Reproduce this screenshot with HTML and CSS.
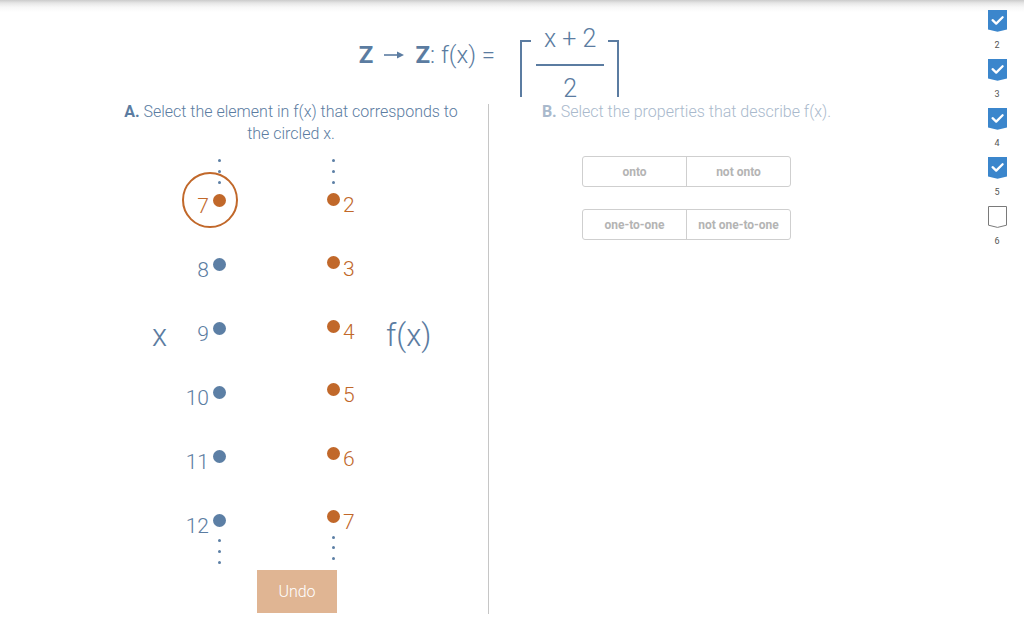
FILE: index.html
```html
<!DOCTYPE html>
<html lang="en">
<head>
<meta charset="utf-8">
<title>Function mapping</title>
<link rel="stylesheet" href="styles.css">
</head>
<body>
<div class="app">
  <div class="main">
    <div class="formula">
      <div class="lhs"><b>Z</b><svg class="arrow" viewBox="0 0 20 10" width="20" height="10" aria-label="→"><path d="M0 5H14" stroke="#5b7ca1" stroke-width="1.6"/><path d="M13 1.4L20 5L13 8.6Z" fill="#5b7ca1"/></svg><b>Z</b>: f(x) =</div>
      <div class="ceil ceil-l"></div>
      <div class="frac">
        <div class="num">x + 2</div>
        <div class="bar"></div>
        <div class="den">2</div>
      </div>
      <div class="ceil ceil-r"></div>
    </div>
    <div class="panels">
      <div class="panel panel-a">
        <div class="heading narrow"><b>A.</b> Select the element in f(x) that corresponds to the circled x.</div>
        <div class="diagram">
          <div class="set-label xlabel">x</div>
          <div class="col col-left">
            <div class="ellipsis"><i></i><i></i><i></i></div>
            <div class="row first selected"><span class="lbl orange">7</span><span class="dot orange-bg"></span><span class="ring"></span></div>
            <div class="row"><span class="lbl">8</span><span class="dot"></span></div>
            <div class="row"><span class="lbl">9</span><span class="dot"></span></div>
            <div class="row"><span class="lbl">10</span><span class="dot"></span></div>
            <div class="row"><span class="lbl">11</span><span class="dot"></span></div>
            <div class="row last"><span class="lbl">12</span><span class="dot"></span></div>
            <div class="ellipsis bottom"><i></i><i></i><i></i></div>
          </div>
          <div class="col col-right">
            <div class="ellipsis"><i></i><i></i><i></i></div>
            <div class="row first"><span class="dot orange-bg"></span><span class="lbl orange">2</span></div>
            <div class="row"><span class="dot orange-bg"></span><span class="lbl orange">3</span></div>
            <div class="row"><span class="dot orange-bg"></span><span class="lbl orange">4</span></div>
            <div class="row"><span class="dot orange-bg"></span><span class="lbl orange">5</span></div>
            <div class="row"><span class="dot orange-bg"></span><span class="lbl orange">6</span></div>
            <div class="row last"><span class="dot orange-bg"></span><span class="lbl orange">7</span></div>
            <div class="ellipsis bottom"><i></i><i></i><i></i></div>
          </div>
          <div class="set-label flabel">f(x)</div>
        </div>
        <div class="undo">Undo</div>
      </div>
      <div class="divider"></div>
      <div class="panel panel-b">
        <div class="heading light"><b>B.</b> Select the properties that describe f(x).</div>
        <div class="btn-group first-group"><span class="opt">onto</span><span class="opt">not onto</span></div>
        <div class="btn-group"><span class="opt">one-to-one</span><span class="opt">not one-to-one</span></div>
      </div>
    </div>
  </div>
  <div class="sidebar">
    <div class="step"><svg class="box" viewBox="0 0 19 22" width="19" height="22"><path class="on" d="M0 0H19V19.4L9.5 21.8L0 19.4Z"/><path class="tick" d="M4.6 10.2L8.2 13.6L14.6 7.2"/></svg><span class="num-lbl">2</span></div>
    <div class="step"><svg class="box" viewBox="0 0 19 22" width="19" height="22"><path class="on" d="M0 0H19V19.4L9.5 21.8L0 19.4Z"/><path class="tick" d="M4.6 10.2L8.2 13.6L14.6 7.2"/></svg><span class="num-lbl">3</span></div>
    <div class="step"><svg class="box" viewBox="0 0 19 22" width="19" height="22"><path class="on" d="M0 0H19V19.4L9.5 21.8L0 19.4Z"/><path class="tick" d="M4.6 10.2L8.2 13.6L14.6 7.2"/></svg><span class="num-lbl">4</span></div>
    <div class="step"><svg class="box" viewBox="0 0 19 22" width="19" height="22"><path class="on" d="M0 0H19V19.4L9.5 21.8L0 19.4Z"/><path class="tick" d="M4.6 10.2L8.2 13.6L14.6 7.2"/></svg><span class="num-lbl">5</span></div>
    <div class="step"><svg class="box" viewBox="0 0 19 22" width="19" height="22"><path class="off" d="M0.5 0.5H18.5V19.2L9.5 21.4L0.5 19.2Z"/></svg><span class="num-lbl">6</span></div>
  </div>
</div>
</body>
</html>
```
FILE: styles.css
```css
html, body {
  margin: 0;
  padding: 0;
}
body {
  width: 1024px;
  height: 621px;
  overflow: hidden;
  font-family: Roboto, "Liberation Sans", sans-serif;
  font-weight: 300;
  color: #5b7ca1;
  background: #fff linear-gradient(to bottom, #cbcbcb 0px, #e6e6e6 3px, #f7f7f7 7px, #ffffff 12px) no-repeat top left / 100% 12px;
}
b { font-weight: 700; }

.app {
  display: flex;
}
.main {
  width: 978px;
}

/* formula */
.formula {
  height: 100px;
  display: flex;
  justify-content: center;
  align-items: flex-start;
}
.lhs {
  font-size: 24px;
  line-height: 30px;
  margin-top: 40px;
  white-space: nowrap;
}
.arrow {
  display: inline-block;
  margin: 0 11px;
  vertical-align: 3px;
}
.ceil {
  width: 11px;
  height: 57px;
  margin-top: 40px;
  border-top: 2px solid #5b7ca1;
  box-sizing: border-box;
}
.ceil-l {
  margin-left: 25px;
  border-left: 2px solid #5b7ca1;
}
.ceil-r {
  margin-left: 4px;
  border-right: 2px solid #5b7ca1;
}
.frac {
  margin-left: 5px;
  margin-top: 24px;
  width: 68px;
  display: flex;
  flex-direction: column;
  align-items: stretch;
  text-align: center;
  font-size: 25px;
  line-height: 30px;
}
.num { padding-bottom: 10px; white-space: nowrap; }
.bar { height: 2px; background: #5b7ca1; }
.den { padding-top: 8px; }

/* panels */
.panels {
  display: flex;
  padding-left: 94px;
}
.panel-a { width: 394px; }
.panel-b { width: 395px; }
.divider {
  width: 0;
  height: 510px;
  margin-top: 4px;
  border-left: 1px solid #c6c6c6;
}
.heading {
  font-size: 16px;
  line-height: 22px;
  padding-top: 1px;
  text-align: center;
}
.heading.narrow {
  max-width: 345px;
  margin: 0 auto;
}
.heading.light { color: #a9b9cc; }

/* diagram */
.diagram {
  display: flex;
  align-items: flex-start;
  margin-top: 10px;
  padding-left: 58px;
}
.set-label {
  font-size: 31px;
  line-height: 36px;
}
.xlabel {
  width: 20px;
  margin-top: 163px;
}
.flabel {
  margin-left: 9px;
  margin-top: 163px;
}
.col {
  display: flex;
  flex-direction: column;
  padding-top: 4px;
}
.col-left {
  width: 54px;
  align-items: flex-end;
}
.col-right {
  width: 50px;
  margin-left: 101px;
  align-items: flex-start;
}
.ellipsis {
  width: 13px;
  display: flex;
  flex-direction: column;
  align-items: center;
  gap: 8px;
}
.col-right .ellipsis.bottom { gap: 7.5px; }
.ellipsis i {
  display: block;
  width: 3px;
  height: 3px;
  border-radius: 50%;
  background: #5c7fa5;
}
.row {
  height: 24px;
  display: flex;
  align-items: flex-start;
  position: relative;
  margin-top: 40px;
}
.col-right .row { margin-top: 39.46px; }
.col-left .row.first { margin-top: 4.8px; }
.col-right .row.first { margin-top: 3.5px; }
.col-left .ellipsis.bottom { margin-top: 6.2px; }
.col-right .ellipsis.bottom { margin-top: 6.8px; }

.dot {
  width: 13px;
  height: 13px;
  border-radius: 50%;
  background: #5c7fa5;
  margin-top: 5.5px;
  flex: none;
}
.orange-bg { background: #c1682a; }
.lbl {
  font-size: 21px;
  line-height: 24px;
  margin-top: 5.6px;
}
.col-left .lbl { margin-right: 4px; }
.col-right .lbl { margin-left: 3px; }
.orange { color: #c1682a; }
.ring {
  position: absolute;
  right: -12px;
  top: -17px;
  width: 56px;
  height: 56px;
  border: 2px solid #c1682a;
  border-radius: 50%;
  box-sizing: border-box;
}

.undo {
  width: 80px;
  height: 43px;
  margin-left: 163px;
  margin-top: 6px;
  background: #e0b593;
  color: #fff;
  font-size: 16px;
  line-height: 43px;
  text-align: center;
}

/* buttons */
.btn-group {
  width: 209px;
  height: 31px;
  margin: 22px auto 0;
  display: flex;
  border: 1px solid #cfcfcf;
  border-radius: 3px;
  box-sizing: border-box;
}
.btn-group.first-group { margin-top: 33px; }
.opt {
  flex: 1;
  display: flex;
  align-items: center;
  justify-content: center;
  font-size: 12px;
  font-weight: 700;
  color: #b4b4b4;
}
.opt + .opt { border-left: 1px solid #cfcfcf; }

/* sidebar */
.sidebar {
  width: 38px;
  padding-top: 10px;
  display: flex;
  flex-direction: column;
  align-items: center;
  gap: 8px;
}
.step {
  display: flex;
  flex-direction: column;
  align-items: center;
}
.box { display: block; }
.box .on { fill: #3b86cc; }
.box .off { fill: #fff; stroke: #7a7a7a; stroke-width: 1; }
.box .tick { fill: none; stroke: #fff; stroke-width: 2.3; stroke-linecap: round; stroke-linejoin: round; }
.num-lbl {
  margin-top: 7px;
  font-size: 9px;
  line-height: 12px;
  color: #555;
  font-weight: 400;
}
```
